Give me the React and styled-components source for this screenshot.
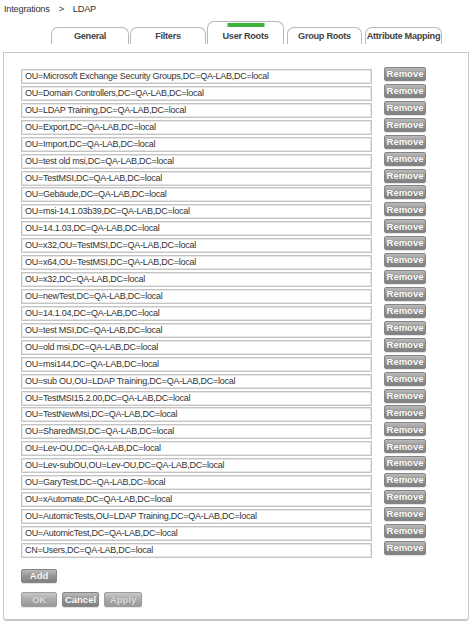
import React from 'react'
import styled, { createGlobalStyle } from 'styled-components'

const Global = createGlobalStyle`
  html, body {
    margin: 0;
    padding: 0;
    background: #fff;
  }
  body {
    font-family: "Liberation Sans", Arial, sans-serif;
    color: #333;
  }
`

const Page = styled.div`
  width: 474px;
  height: 621px;
  padding: 3px 5px 0 3px;
  box-sizing: border-box;
  display: flex;
  flex-direction: column;
`

const Breadcrumb = styled.div`
  font-size: 9.2px;
  letter-spacing: -0.2px;
  color: #333;
  padding-left: 1px;
  height: 12px;
  line-height: 12px;
  display: flex;
  gap: 9px;
`

const TabBar = styled.div`
  display: flex;
  align-items: flex-end;
  gap: 1px;
  padding-left: 48px;
  margin-top: 6px;
  height: 23px;
`

const Tab = styled.div`
  position: relative;
  width: ${p => p.$w}px;
  height: ${p => (p.$active ? 23 : 17)}px;
  box-sizing: border-box;
  border: 1px solid #b8b8b8;
  border-bottom: none;
  border-radius: 7px 7px 0 0;
  background: #fff;
  font-size: 9.2px;
  letter-spacing: -0.3px;
  font-weight: bold;
  color: #444;
  white-space: nowrap;
  display: flex;
  align-items: flex-end;
  justify-content: center;
  padding-bottom: 3px;
  margin-left: ${p => p.$ml || 0}px;
`

const ActiveMark = styled.span`
  position: absolute;
  top: 1px;
  left: 50%;
  transform: translateX(-50%);
  width: 37px;
  height: 4px;
  background: #3cb43c;
`

const Panel = styled.div`
  margin-top: 8px;
  flex: 1;
  border: 1px solid #c8c8c8;
  border-bottom-width: 2px;
  border-radius: 0 0 4px 4px;
  padding: 16px 0 0 17px;
  display: flex;
  flex-direction: column;
`

const List = styled.div`
  display: flex;
  flex-direction: column;
  gap: 1.93px;
`

const Row = styled.div`
  display: flex;
  align-items: flex-start;
  gap: 12px;
`

const Field = styled.div`
  width: 351px;
  height: 15px;
  box-sizing: border-box;
  border: 1px solid #c4c4c4;
  box-shadow: inset 0 0 0 1px #e6e6e6;
  font-size: 9px;
  letter-spacing: -0.25px;
  line-height: 13px;
  padding-left: 3px;
  color: #333;
  white-space: nowrap;
  overflow: hidden;
`

const GrayButton = styled.button`
  font-family: "Liberation Sans", Arial, sans-serif;
  width: ${p => p.$w}px;
  height: ${p => p.$h || 14}px;
  margin-top: ${p => p.$mt || 0}px;
  padding: 0;
  box-sizing: border-box;
  border: 1px solid #858585;
  border-radius: 2px;
  background: linear-gradient(#bababa, #969696 50%, #808080);
  color: ${p => (p.$disabled ? '#d6d6d6' : '#fff')};
  font-size: 9.5px;
  font-weight: bold;
  line-height: 1;
  text-shadow: 0 0 1px rgba(0, 0, 0, 0.3);
  box-shadow: 0 1px 1px rgba(0, 0, 0, 0.12);
  opacity: ${p => (p.$disabled ? 0.8 : 1)};
  cursor: default;
`

const AddRow = styled.div`
  margin-top: 11px;
  display: flex;
`

const Actions = styled.div`
  margin-top: 9px;
  display: flex;
  gap: 5px;
`

const tabs = [
  { label: 'General', w: 78 },
  { label: 'Filters', w: 76 },
  { label: 'User Roots', w: 77, active: true },
  { label: 'Group Roots', w: 75, ml: 2 },
  { label: 'Attribute Mapping', w: 77, ml: 2 }
]

const roots = [
  'OU=Microsoft Exchange Security Groups,DC=QA-LAB,DC=local',
  'OU=Domain Controllers,DC=QA-LAB,DC=local',
  'OU=LDAP Training,DC=QA-LAB,DC=local',
  'OU=Export,DC=QA-LAB,DC=local',
  'OU=Import,DC=QA-LAB,DC=local',
  'OU=test old msi,DC=QA-LAB,DC=local',
  'OU=TestMSI,DC=QA-LAB,DC=local',
  'OU=Gebäude,DC=QA-LAB,DC=local',
  'OU=msi-14.1.03b39,DC=QA-LAB,DC=local',
  'OU=14.1.03,DC=QA-LAB,DC=local',
  'OU=x32,OU=TestMSI,DC=QA-LAB,DC=local',
  'OU=x64,OU=TestMSI,DC=QA-LAB,DC=local',
  'OU=x32,DC=QA-LAB,DC=local',
  'OU=newTest,DC=QA-LAB,DC=local',
  'OU=14.1.04,DC=QA-LAB,DC=local',
  'OU=test MSI,DC=QA-LAB,DC=local',
  'OU=old msi,DC=QA-LAB,DC=local',
  'OU=msi144,DC=QA-LAB,DC=local',
  'OU=sub OU,OU=LDAP Training,DC=QA-LAB,DC=local',
  'OU=TestMSI15.2.00,DC=QA-LAB,DC=local',
  'OU=TestNewMsi,DC=QA-LAB,DC=local',
  'OU=SharedMSI,DC=QA-LAB,DC=local',
  'OU=Lev-OU,DC=QA-LAB,DC=local',
  'OU=Lev-subOU,OU=Lev-OU,DC=QA-LAB,DC=local',
  'OU=GaryTest,DC=QA-LAB,DC=local',
  'OU=xAutomate,DC=QA-LAB,DC=local',
  'OU=AutomicTests,OU=LDAP Training,DC=QA-LAB,DC=local',
  'OU=AutomicTest,DC=QA-LAB,DC=local',
  'CN=Users,DC=QA-LAB,DC=local'
]

export default function App() {
  return (
    <Page>
      <Global />
      <Breadcrumb>
        <span>Integrations</span>
        <span>&gt;</span>
        <span>LDAP</span>
      </Breadcrumb>
      <TabBar>
        {tabs.map(t => (
          <Tab key={t.label} $w={t.w} $ml={t.ml} $active={t.active}>
            {t.active && <ActiveMark />}
            {t.label}
          </Tab>
        ))}
      </TabBar>
      <Panel>
        <List>
          {roots.map(r => (
            <Row key={r}>
              <Field>{r}</Field>
              <GrayButton $w={42} $mt={-2}>Remove</GrayButton>
            </Row>
          ))}
        </List>
        <AddRow>
          <GrayButton $w={36}>Add</GrayButton>
        </AddRow>
        <Actions>
          <GrayButton $w={36} $h={15} $disabled>OK</GrayButton>
          <GrayButton $w={37} $h={15}>Cancel</GrayButton>
          <GrayButton $w={38} $h={15} $disabled>Apply</GrayButton>
        </Actions>
      </Panel>
    </Page>
  )
}
